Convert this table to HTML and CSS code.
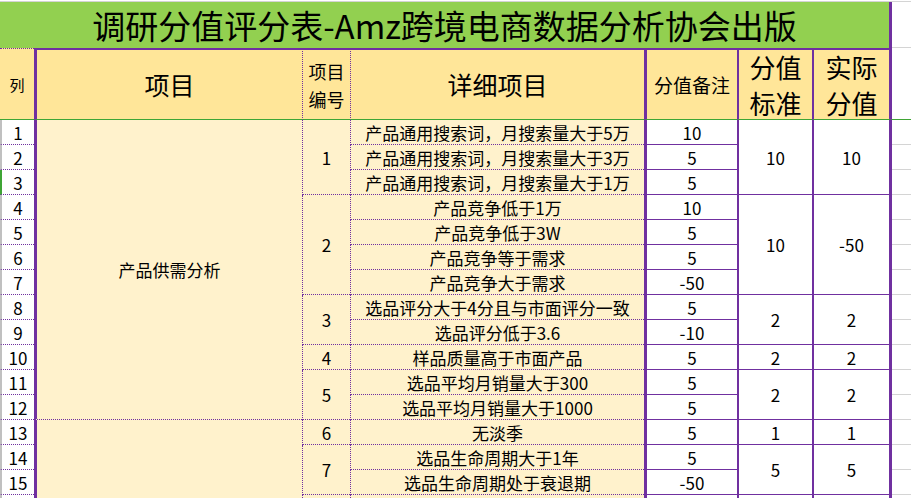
FILE: index.html
```html
<!DOCTYPE html>
<html lang="zh-CN">
<head>
<meta charset="utf-8">
<title>调研分值评分表</title>
<link rel="stylesheet" href="styles.css">
</head>
<body>
<div class="sheet">
  <div class="topstrip"></div>
  <div class="cell title">调研分值评分表-Amz跨境电商数据分析协会出版</div>
  <div class="cell c7 tfill"></div>

  <div class="cell hd c0 h-col">列</div>
  <div class="cell hd c1 h-big">项目</div>
  <div class="cell hd c2 h-num">项目<br>编号</div>
  <div class="cell hd c3 h-big">详细项目</div>
  <div class="cell hd c4 h-note">分值备注</div>
  <div class="cell hd c5 h-two">分值<br>标准</div>
  <div class="cell hd c6 h-two">实际<br>分值</div>
  <div class="cell hd c7 hfill"></div>

  <!-- row 1 -->
  <div class="cell d c0">1</div>
  <div class="cell d c1 y s12">产品供需分析</div>
  <div class="cell d c2 y s3">1</div>
  <div class="cell d c3 y">产品通用搜索词，月搜索量大于5万</div>
  <div class="cell d c4">10</div>
  <div class="cell d c5 s3">10</div>
  <div class="cell d c6 s3">10</div>
  <div class="cell d c7"></div>
  <!-- row 2 -->
  <div class="cell d c0">2</div>
  <div class="cell d c3 y">产品通用搜索词，月搜索量大于3万</div>
  <div class="cell d c4">5</div>
  <div class="cell d c7"></div>
  <!-- row 3 -->
  <div class="cell d c0 sel">3</div>
  <div class="cell d c3 y">产品通用搜索词，月搜索量大于1万</div>
  <div class="cell d c4">5</div>
  <div class="cell d c7"></div>
  <!-- row 4 -->
  <div class="cell d c0">4</div>
  <div class="cell d c2 y s4">2</div>
  <div class="cell d c3 y">产品竞争低于1万</div>
  <div class="cell d c4">10</div>
  <div class="cell d c5 s4">10</div>
  <div class="cell d c6 s4">-50</div>
  <div class="cell d c7"></div>
  <!-- row 5 -->
  <div class="cell d c0">5</div>
  <div class="cell d c3 y">产品竞争低于3W</div>
  <div class="cell d c4">5</div>
  <div class="cell d c7"></div>
  <!-- row 6 -->
  <div class="cell d c0">6</div>
  <div class="cell d c3 y">产品竞争等于需求</div>
  <div class="cell d c4">5</div>
  <div class="cell d c7"></div>
  <!-- row 7 -->
  <div class="cell d c0">7</div>
  <div class="cell d c3 y">产品竞争大于需求</div>
  <div class="cell d c4">-50</div>
  <div class="cell d c7"></div>
  <!-- row 8 -->
  <div class="cell d c0">8</div>
  <div class="cell d c2 y s2">3</div>
  <div class="cell d c3 y">选品评分大于4分且与市面评分一致</div>
  <div class="cell d c4">5</div>
  <div class="cell d c5 s2">2</div>
  <div class="cell d c6 s2">2</div>
  <div class="cell d c7"></div>
  <!-- row 9 -->
  <div class="cell d c0">9</div>
  <div class="cell d c3 y">选品评分低于3.6</div>
  <div class="cell d c4">-10</div>
  <div class="cell d c7"></div>
  <!-- row 10 -->
  <div class="cell d c0">10</div>
  <div class="cell d c2 y">4</div>
  <div class="cell d c3 y">样品质量高于市面产品</div>
  <div class="cell d c4">5</div>
  <div class="cell d c5">2</div>
  <div class="cell d c6">2</div>
  <div class="cell d c7"></div>
  <!-- row 11 -->
  <div class="cell d c0">11</div>
  <div class="cell d c2 y s2">5</div>
  <div class="cell d c3 y">选品平均月销量大于300</div>
  <div class="cell d c4">5</div>
  <div class="cell d c5 s2">2</div>
  <div class="cell d c6 s2">2</div>
  <div class="cell d c7"></div>
  <!-- row 12 -->
  <div class="cell d c0">12</div>
  <div class="cell d c3 y">选品平均月销量大于1000</div>
  <div class="cell d c4">5</div>
  <div class="cell d c7"></div>
  <!-- row 13 -->
  <div class="cell d c0">13</div>
  <div class="cell d c1 y s4"></div>
  <div class="cell d c2 y">6</div>
  <div class="cell d c3 y">无淡季</div>
  <div class="cell d c4">5</div>
  <div class="cell d c5">1</div>
  <div class="cell d c6">1</div>
  <div class="cell d c7"></div>
  <!-- row 14 -->
  <div class="cell d c0">14</div>
  <div class="cell d c2 y s2">7</div>
  <div class="cell d c3 y">选品生命周期大于1年</div>
  <div class="cell d c4">5</div>
  <div class="cell d c5 s2">5</div>
  <div class="cell d c6 s2">5</div>
  <div class="cell d c7"></div>
  <!-- row 15 -->
  <div class="cell d c0">15</div>
  <div class="cell d c3 y">选品生命周期处于衰退期</div>
  <div class="cell d c4">-50</div>
  <div class="cell d c7"></div>
  <!-- row 16 (partially visible) -->
  <div class="cell d c0"></div>
  <div class="cell d c2 y"></div>
  <div class="cell d c3 y"></div>
  <div class="cell d c4"></div>
  <div class="cell d c5"></div>
  <div class="cell d c6"></div>
  <div class="cell d c7"></div>
</div>
</body>
</html>
```
FILE: styles.css
```css
body {
  margin: 0;
  overflow: hidden;
  background: #ffffff;
  color: #000000;
  font-family: "Noto Sans CJK SC", "Noto Sans", sans-serif;
}

.sheet {
  display: grid;
  grid-template-columns: 34px 268px 48px 294px 93px 75px 80px 19px;
  grid-template-rows: 2px 46px 72px repeat(16, 25px);
  width: 911px;
  height: 498px;
  overflow: hidden;
}

.cell {
  box-sizing: border-box;
  display: flex;
  align-items: center;
  justify-content: center;
  text-align: center;
  line-height: 1;
  font-size: 17px;
  white-space: nowrap;
  overflow: hidden;
}

.c0 { grid-column: 1; }
.c1 { grid-column: 2; border-left: 3px solid #7030a0; }
.c2 { grid-column: 3; border-left: 1px dotted #7030a0; }
.c3 { grid-column: 4; border-left: 1px dotted #7030a0; }
.c4 { grid-column: 5; border-left: 3px solid #7030a0; }
.c5 { grid-column: 6; border-left: 2px solid #7030a0; }
.c6 { grid-column: 7; border-left: 2px solid #7030a0; border-right: 3px solid #7030a0; }
.c7 { grid-column: 8; }

.s2 { grid-row: span 2; }
.s3 { grid-row: span 3; }
.s4 { grid-row: span 4; }
.s12 { grid-row: span 12; }

.topstrip {
  grid-column: 1 / 9;
  box-sizing: border-box;
  border-bottom: 1px solid #d4d4d4;
}

.title {
  grid-column: 1 / 8;
  background: #92d050;
  border-right: 3px solid #7030a0;
  font-size: 33px;
  padding-top: 1px;
}

.tfill {
  border-bottom: 1px solid #d4d4d4;
}

/* header row */
.hd {
  background: #ffe699;
  border-bottom: 1px solid #3fa535;
  border-top: 2px solid #7030a0;
}
.hd.c0 { border-top: 1px dotted #7030a0; }
.hd.c7 { background: #ffffff; border-top: none; }

.h-col { font-size: 15px; }
.h-big { font-size: 25px; }
.h-num { font-size: 18px; line-height: 28px; }
.h-note { font-size: 19px; }
.h-two { font-size: 26px; line-height: 36px; }

/* data rows */
.d { background: #ffffff; }
.y { background: #fff2cc; }

.d.c0,
.d.c1,
.d.c2,
.d.c3 { border-bottom: 1px dotted #7030a0; }
.d.c4,
.d.c5,
.d.c6 { border-bottom: 1px solid #7030a0; }
.d.c7 { border-bottom: 1px solid #d4d4d4; }

.d.c0 { border-left: 2px solid #c0c0c0; }
.d.c0.sel { border-left-color: #3fa535; }
```
